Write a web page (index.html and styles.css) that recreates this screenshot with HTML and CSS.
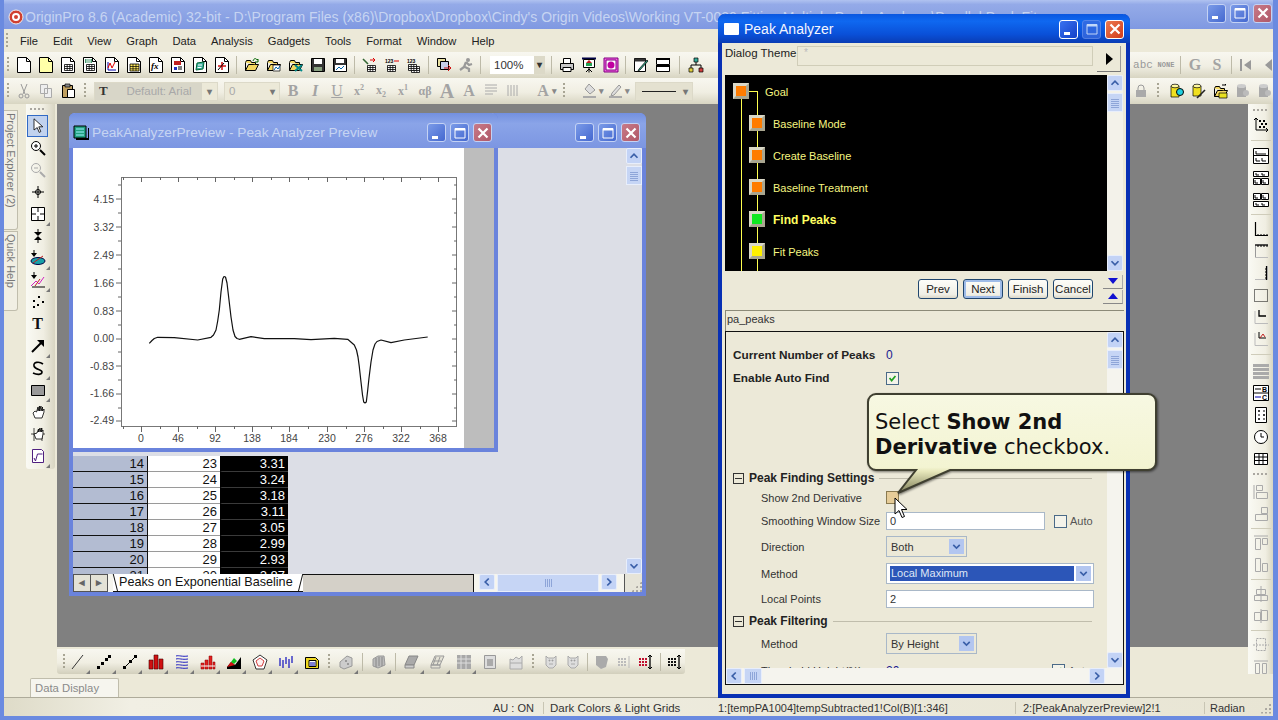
FILE: index.html
```html
<!DOCTYPE html>
<html>
<head>
    <meta charset="UTF-8">
    <title>OriginPro 8.6 - Peak Analyzer</title>
    <link rel="stylesheet" href="styles.css">
</head>
<body>
<svg class="defs" width="0" height="0">
    <defs>
        <g id="pg"><path d="M1.5 .5h9l4 4v11h-13z" fill="#fff" stroke="#000"/><path d="M10.5 .5v4h4" fill="none" stroke="#000"/></g>
        <g id="pgy"><path d="M1.5 .5h9l4 4v11h-13z" fill="#ffffa8" stroke="#000"/><path d="M10.5 .5v4h4" fill="none" stroke="#000"/></g>
        <g id="gr"><path d="M4.5 7.5h8v6h-8zM4.5 9.5h8M4.5 11.5h8M7.2 7.5v6M9.8 7.5v6" fill="#fff" stroke="#000" stroke-width=".8"/></g>
        <g id="fold"><path d="M1.5 5.5v8h10l3-6h-10l-3 6" fill="#f4d860" stroke="#000"/><path d="M1.5 5.5l1-2h4l1 2h4v2" fill="#f4d860" stroke="#000"/></g>
        <g id="crn"><path d="M16 20h4v-4z" fill="#777"/></g>
        <linearGradient id="callout-fill" gradientUnits="userSpaceOnUse" x1="0" y1="2" x2="0" y2="101">
            <stop offset="0" stop-color="#f7f8e2"/>
            <stop offset=".74" stop-color="#f3f4d2"/>
            <stop offset=".78" stop-color="#e8e8bc"/>
            <stop offset="1" stop-color="#7f7f58"/>
        </linearGradient>
    </defs>
    <symbol id="page" viewBox="0 0 16 16"><use href="#pg"/></symbol>
    <symbol id="page-y" viewBox="0 0 16 16"><use href="#pgy"/></symbol>
    <symbol id="page-wks" viewBox="0 0 16 16"><use href="#pg"/><use href="#gr"/></symbol>
    <symbol id="page-mat" viewBox="0 0 16 16"><use href="#pg"/><use href="#gr"/><path d="M3 2h7v4H3z" fill="#4a9a70"/><path d="M4 3h5M4 5h5" stroke="#fff"/></symbol>
    <symbol id="page-plot" viewBox="0 0 16 16"><use href="#pg"/><path d="M4 5v8h8" fill="none" stroke="#00a"/><path d="M4 11l2-5 2 5 3-6" fill="none" stroke="#d00"/></symbol>
    <symbol id="page-ywk" viewBox="0 0 16 16"><use href="#pg"/><path d="M4 7h9v7H4z" fill="#ffe860" stroke="#000" stroke-width=".8"/><path d="M4 9.5h9M4 11.8h9M7 7v7M10 7v7" stroke="#000" stroke-width=".7"/></symbol>
    <symbol id="page-fx" viewBox="0 0 16 16"><use href="#pg"/><text x="3" y="12" class="ic-t">fx</text></symbol>
    <symbol id="page-lay" viewBox="0 0 16 16"><use href="#pg"/><path d="M4 4h7v4H4z" fill="#c02020"/><path d="M4 10h3v3H4z" fill="#2030c0"/><path d="M8 10h4M8 12h4" stroke="#000"/></symbol>
    <symbol id="page-note" viewBox="0 0 16 16"><use href="#pg"/><path d="M5 6l7-1-1 7-7 1z" fill="#40b0a0" stroke="#063"/><path d="M6 8h4M5.5 10.5h4" stroke="#fff"/></symbol>
    <symbol id="page-red" viewBox="0 0 16 16"><use href="#pg"/><path d="M8 5v8M4 9h8" stroke="#d01010" stroke-width="1.5"/><path d="M4 13l6-7" stroke="#000"/></symbol>
    <symbol id="open" viewBox="0 0 16 16"><use href="#fold"/><path d="M9 4c1-3 3-3 4-1l1-1v3h-3" fill="none" stroke="#060"/></symbol>
    <symbol id="open-gr" viewBox="0 0 16 16"><use href="#fold"/><path d="M7 8h7v6H7z" fill="#fff" stroke="#000" stroke-width=".7"/><path d="M8 13l2-3 2 2 2-3" stroke="#06a" fill="none"/></symbol>
    <symbol id="open-x" viewBox="0 0 16 16"><use href="#fold"/><path d="M7 8l7 6M14 8l-7 6" stroke="#088" stroke-width="2"/></symbol>
    <symbol id="save" viewBox="0 0 16 16"><path d="M1.5 1.5h13v13h-13z" fill="#333" stroke="#000"/><path d="M4 2h8v5H4z" fill="#fff"/><path d="M4 10h8v4H4z" fill="#88a080"/></symbol>
    <symbol id="save-gr" viewBox="0 0 16 16"><path d="M1.5 1.5h13v13h-13z" fill="#333" stroke="#000"/><path d="M4 2h8v4H4z" fill="#fff"/><path d="M3 8h11v6H3z" fill="#fff"/><path d="M4 13l3-3 2 2 3-3" stroke="#06a" fill="none"/></symbol>
    <symbol id="imp-wand" viewBox="0 0 16 16"><use href="#gr" transform="translate(1 1)"/><path d="M1 2l5 5" stroke="#363" stroke-width="1.6"/><path d="M8 3h5l-2-2M13 3l-2 2" stroke="#d00" fill="none"/></symbol>
    <symbol id="imp-1" viewBox="0 0 16 16"><use href="#gr" transform="translate(-1 1)"/><text x="1" y="6" class="ic-s">123</text><path d="M10 4h5" stroke="#d00"/></symbol>
    <symbol id="imp-2" viewBox="0 0 16 16"><use href="#gr" transform="translate(1 2)"/><use href="#gr" transform="translate(-2 0)"/><text x="1" y="6" class="ic-s">123</text></symbol>
    <symbol id="dup" viewBox="0 0 16 16"><path d="M1.5 1.5h8v8h-8z" fill="#e8e0a0" stroke="#000"/><path d="M4.5 4.5h8v8h-8z" fill="#c8d0e8" stroke="#000"/><path d="M8 11h7M12 8l3 3-3 3" fill="none" stroke="#d01010"/></symbol>
    <symbol id="run" viewBox="0 0 16 16"><circle cx="10" cy="3" r="2" fill="#999"/><path d="M8 5l-2 5-4 3M8 5l3 3 3-1M7 10l4 2v3" fill="none" stroke="#999" stroke-width="2.2"/></symbol>
    <symbol id="print" viewBox="0 0 16 16"><path d="M4.5 1.5h7v5h-7z" fill="#fff" stroke="#000"/><path d="M1.5 6.5h13v6h-13z" fill="#c8c8c8" stroke="#000"/><path d="M4 10.5h8v4H4z" fill="#fff" stroke="#000"/></symbol>
    <symbol id="slide" viewBox="0 0 16 16"><path d="M1 1.5h14" stroke="#004" stroke-width="2"/><path d="M2.5 2.5h11v8h-11z" fill="#fff" stroke="#000"/><path d="M5 6l3-3 3 3" fill="#c02020"/><path d="M5 6h6v3H5z" fill="#20a050"/><path d="M8 10.5v5M5 15l3-3 3 3" stroke="#000" fill="none"/></symbol>
    <symbol id="pink" viewBox="0 0 16 16"><path d="M1 1h14v14H1z" fill="#f060e0" stroke="#800080"/><path d="M3 3h10v10H3z" fill="#fff" stroke="#800080"/><circle cx="8" cy="8" r="3.5" fill="#c000a0"/></symbol>
    <symbol id="notepad" viewBox="0 0 16 16"><path d="M1.5 1.5h11v13h-11z" fill="#fff" stroke="#000"/><path d="M1.5 1.5h11v3h-11z" fill="#333"/><path d="M6 12l8-9 1 1-8 9-2 1z" fill="#3a8" stroke="#000" stroke-width=".7"/></symbol>
    <symbol id="stack2" viewBox="0 0 16 16"><path d="M1.5 1.5h13v6h-13zM1.5 8.5h13v6h-13z" fill="#fff" stroke="#000"/><path d="M1 1h14v2H1zM1 8h14v2H1z" fill="#000"/></symbol>
    <symbol id="tree-i" viewBox="0 0 16 16"><path d="M8 4v4M3 11V8h10v3" fill="none" stroke="#000"/><path d="M6 1h4v4H6z" fill="#3a9" stroke="#000" stroke-width=".7"/><path d="M1 11h4v4H1z" fill="#e0d040" stroke="#000" stroke-width=".7"/><path d="M11 11h4v4h-4z" fill="#d04040" stroke="#000" stroke-width=".7"/></symbol>
    <symbol id="cut" viewBox="0 0 16 16"><path d="M5 1l4 10M11 1L7 11" stroke="#999" fill="none"/><circle cx="5" cy="13" r="2" fill="none" stroke="#999"/><circle cx="11" cy="13" r="2" fill="none" stroke="#999"/></symbol>
    <symbol id="copy" viewBox="0 0 16 16"><path d="M2.5 1.5h7v9h-7zM6.5 5.5h7v9h-7z" fill="#eee" stroke="#aaa"/></symbol>
    <symbol id="paste" viewBox="0 0 16 16"><path d="M2.5 2.5h10v12h-10z" fill="#c0a060" stroke="#000"/><path d="M5 1h5v3H5z" fill="#888" stroke="#000" stroke-width=".7"/><path d="M7.5 6.5h7v8h-7z" fill="#fff" stroke="#000"/></symbol>
    <symbol id="fill" viewBox="0 0 16 16"><path d="M7 1l6 6-5 4-5-5z" fill="#ddd" stroke="#999"/><path d="M1 13h13v2H1z" fill="#aaa"/></symbol>
    <symbol id="pen" viewBox="0 0 16 16"><path d="M4 10l7-8 2 2-7 8-3 1z" fill="#ddd" stroke="#999"/><path d="M1 13h13v2H1z" fill="#aaa"/></symbol>
    <symbol id="align-i" viewBox="0 0 16 16"><path d="M2 2h12M2 5h12M2 8h12M2 11h8" stroke="#aaa"/></symbol>
    <symbol id="bars-i" viewBox="0 0 16 16"><path d="M3 2v11M6 2v11M9 2v11M12 2v11" stroke="#aaa"/></symbol>
    <symbol id="lock" viewBox="0 0 16 16"><path d="M5 7V5a3 3 0 016 0v2" fill="none" stroke="#999"/><path d="M3 7h10v7H3z" fill="#aaa"/></symbol>
    <symbol id="db-find" viewBox="0 0 16 16"><path d="M2 3h8v11H2z" fill="#f0e020" stroke="#000" stroke-width=".7"/><ellipse cx="6" cy="3" rx="4" ry="1.8" fill="#fff8a0" stroke="#000" stroke-width=".7"/><circle cx="11" cy="9" r="3.5" fill="#20d0e0" stroke="#000"/></symbol>
    <symbol id="db-edit" viewBox="0 0 16 16"><path d="M2 3h8v10H2z" fill="#f0e020" stroke="#000" stroke-width=".7"/><ellipse cx="6" cy="3" rx="4" ry="1.8" fill="#fff8a0" stroke="#000" stroke-width=".7"/><path d="M6 15l8-8" stroke="#222" stroke-width="1.6"/></symbol>
    <symbol id="db-open" viewBox="0 0 16 16"><use href="#fold"/><path d="M6 10h8v5H6z" fill="#e8e020" stroke="#000" stroke-width=".7"/><path d="M9 2h4l-1-1" stroke="#000" fill="none"/></symbol>
    <symbol id="db-off" viewBox="0 0 16 16"><path d="M2 3h9v11H2z" fill="#aaa"/><ellipse cx="6.5" cy="3" rx="4.5" ry="2" fill="#ccc"/><circle cx="11" cy="10" r="3" fill="#bbb"/></symbol>
    <symbol id="first" viewBox="0 0 16 16"><path d="M3 2v12" stroke="#999" stroke-width="2"/><path d="M13 3L6 8l7 5z" fill="#999"/></symbol>
    <symbol id="prevb" viewBox="0 0 16 16"><path d="M12 2L5 8l7 6z" fill="#999"/></symbol>
    <symbol id="arrow" viewBox="0 0 16 20"><path d="M3 1v14l4-3 2.5 6 2-1-2.5-6h5z" fill="#fff" stroke="#000"/></symbol>
    <symbol id="zin" viewBox="0 0 16 16"><circle cx="6" cy="6" r="4.5" fill="#fff" stroke="#000"/><path d="M4 6h4M6 4v4" stroke="#000"/><path d="M10 10l5 5" stroke="#000" stroke-width="2"/></symbol>
    <symbol id="zout" viewBox="0 0 16 16"><circle cx="6" cy="6" r="4.5" fill="none" stroke="#aaa"/><path d="M4 6h4" stroke="#aaa"/><path d="M10 10l5 5" stroke="#aaa" stroke-width="2"/></symbol>
    <symbol id="cross" viewBox="0 0 16 16"><path d="M8 2v12M2 8h12" stroke="#000"/><circle cx="8" cy="8" r="2.5" fill="none" stroke="#000"/></symbol>
    <symbol id="mask" viewBox="0 0 16 16"><path d="M1.5 1.5h13v13h-13z" fill="#fff" stroke="#000"/><path d="M8 1v5M8 10v5M1 8h5M10 8h5" stroke="#000"/><use href="#crn"/></symbol>
    <symbol id="vmerge" viewBox="0 0 16 16"><path d="M8 1v5M8 10v5" stroke="#000"/><path d="M4 4h8L8 8zM4 12h8L8 8z" fill="#000"/></symbol>
    <symbol id="pick-a" viewBox="0 0 16 16"><path d="M4 0v5" stroke="#000"/><path d="M1 3h6L4 7z" fill="#000"/><ellipse cx="8" cy="11" rx="7" ry="3.5" fill="#18a0a8" stroke="#004"/><path d="M3 13l10-7" stroke="#c02020"/><use href="#crn"/></symbol>
    <symbol id="pick-b" viewBox="0 0 16 16"><path d="M4 0v5" stroke="#000"/><path d="M1 3h6L4 7z" fill="#000"/><path d="M1 14l5-5 3 3 5-7" fill="none" stroke="#d020c0"/><path d="M2 15h13" stroke="#000"/><path d="M5 14l5-7" stroke="#c02020"/><use href="#crn"/></symbol>
    <symbol id="dots" viewBox="0 0 16 16"><path d="M8 2h2v2H8zM3 6h2v2H3zM12 7h2v2h-2zM7 10h2v2H7zM3 12h2v2H3z" fill="#000"/></symbol>
    <symbol id="line-a" viewBox="0 0 16 16"><path d="M2 14L13 3" stroke="#000" stroke-width="2"/><path d="M7 2h7v7z" fill="#000"/><use href="#crn"/></symbol>
    <symbol id="curve" viewBox="0 0 16 16"><path d="M13 4C9 1 3 2 4 6s8 3 8 6-5 3-9 1" fill="none" stroke="#000" stroke-width="1.6"/><use href="#crn"/></symbol>
    <symbol id="rect-i" viewBox="0 0 16 16"><path d="M1.5 3.5h13v10h-13z" fill="#999" stroke="#000"/><use href="#crn"/></symbol>
    <symbol id="hand" viewBox="0 0 16 16"><path d="M3 9l2 5h7l2-6V5l-1.5 2V3L11 7V2L9.5 7V2L8 7V3L6.5 8 5 7z" fill="#fff" stroke="#000" stroke-width=".8"/></symbol>
    <symbol id="hand2" viewBox="0 0 16 16"><path d="M1 8h14M4 2v13M12 2v13" stroke="#000" stroke-width=".7"/><path d="M4 8l2 5h6l1-5V4l-1.5 2V2L10 6V2L8.5 6V3L7 7z" fill="#fff" stroke="#000" stroke-width=".8"/></symbol>
    <symbol id="sqrt" viewBox="0 0 16 16"><path d="M2.5 1.5h9l2 2v11h-11z" fill="#fff" stroke="#502080"/><path d="M4 10l1.500 3 2-7h5" fill="none" stroke="#502080"/><use href="#crn"/></symbol>
    <symbol id="ln" viewBox="0 0 16 16"><path d="M2 15L13 1" stroke="#333"/><use href="#crn"/></symbol>
    <symbol id="sc" viewBox="0 0 16 16"><path d="M1 12h3v3H1zM5 8h3v3H5zM9 4h3v3H9zM12 1h3v3h-3z" fill="#000"/><use href="#crn"/></symbol>
    <symbol id="lsc" viewBox="0 0 16 16"><path d="M2 14L14 2" stroke="#000"/><path d="M1 12h3v3H1zM7 6h3v3H7zM12 1h3v3h-3z" fill="#000"/><use href="#crn"/></symbol>
    <symbol id="col" viewBox="0 0 16 16"><path d="M1 6h4v9H1zM6 1h4v14H6zM11 5h4v10h-4z" fill="#d01010" stroke="#400" stroke-width=".6"/><use href="#crn"/></symbol>
    <symbol id="waves" viewBox="0 0 16 16"><path d="M2 2c3-1 6 1 12 0M2 5c3-1 6 1 12 0M2 8c3-1 6 1 12 0M2 11c3-1 6 1 12 0M2 14c3-1 6 1 12 0" fill="none" stroke="#2020c0"/><use href="#crn"/></symbol>
    <symbol id="colr" viewBox="0 0 16 16"><path d="M1 9h3v6H1zM5 6h3v9H5zM9 2h3v13H9zM13 8h2v7h-2z" fill="#e02020" stroke="#800" stroke-width=".5"/><path d="M1 12h14" stroke="#fff"/><use href="#crn"/></symbol>
    <symbol id="area" viewBox="0 0 16 16"><path d="M1 13l4-5 4 3 6-8v12H1z" fill="#000"/><path d="M5 8l3-4 3 3-3 3z" fill="#10c020"/><path d="M9 11l-4-3-4 5z" fill="#d01010"/><use href="#crn"/></symbol>
    <symbol id="polar" viewBox="0 0 16 16"><path d="M8 1l7 5-3 9H4L1 6z" fill="#fff" stroke="#333"/><path d="M8 4l4 3-2 5H6L4 7z" fill="#fff0f0" stroke="#d04040"/><use href="#crn"/></symbol>
    <symbol id="spike" viewBox="0 0 16 16"><path d="M2 4v8M5 6v8M8 3v7M11 5v9M14 2v7" stroke="#2020c0" stroke-width="1.3"/><use href="#crn"/></symbol>
    <symbol id="temp" viewBox="0 0 16 16"><path d="M1.5 3.5h10l3 3v8h-13z" fill="#f0d820" stroke="#000"/><path d="M5 6.5h7v6H5z" fill="#fff" stroke="#000"/><path d="M6 9h5M6 11h5" stroke="#00a"/></symbol>
    <symbol id="off-a" viewBox="0 0 16 16"><path d="M2 8l7-6 5 2v8l-8 3-4-2z" fill="#ccc" stroke="#999"/><path d="M7 6h2v2H7zM9 9h2v2H9z" fill="#999"/><use href="#crn"/></symbol>
    <symbol id="off-b" viewBox="0 0 16 16"><path d="M2 5l5-3h6l1 9-7 3-5-2z" fill="#bbb" stroke="#999"/><path d="M5 4v9M8 3v9M11 3v9" stroke="#888"/><use href="#crn"/></symbol>
    <symbol id="off-c" viewBox="0 0 16 16"><path d="M1 11l4-9h9l-4 9z" fill="#aaa" stroke="#888"/><path d="M1 11h9v3H1z" fill="#ccc" stroke="#888"/><use href="#crn"/></symbol>
    <symbol id="off-d" viewBox="0 0 16 16"><path d="M1 11l4-9h9l-4 9zM1 11h9v3H1z" fill="#e4e2d6" stroke="#999"/><path d="M3 7h8M6 3l-3 8M10 3l-3 8" stroke="#999"/><use href="#crn"/></symbol>
    <symbol id="off-e" viewBox="0 0 16 16"><path d="M1 1h14v14H1z" fill="#a8a8a8"/><path d="M1 5h14M1 9h14M5 1v14M10 1v14" stroke="#ddd"/><use href="#crn"/></symbol>
    <symbol id="off-f" viewBox="0 0 16 16"><path d="M2.5 1.5h11v13h-11z" fill="#ddd" stroke="#999"/><path d="M5 5h6v7H5z" fill="#aaa"/></symbol>
    <symbol id="off-g" viewBox="0 0 16 16"><path d="M2 5l3 1 3-3 3 2 3-3v13H2z" fill="#ddd" stroke="#aaa"/><path d="M2 9h12" stroke="#aaa"/></symbol>
    <symbol id="off-h" viewBox="0 0 16 16"><path d="M3 2l2 2h6l2-2v9l-3 3H6l-3-3z" fill="#ddd" stroke="#aaa"/><path d="M6 6h1v1H6zM9 6h1v1H9zM6 10h4" stroke="#aaa"/></symbol>
    <symbol id="off-i" viewBox="0 0 16 16"><path d="M2 2h10l2 3-2 8-5 2-5-4z" fill="#aaa"/></symbol>
    <symbol id="d-ar" viewBox="0 0 16 16"><path d="M2 4h2v2H2zM5 4h2v2H5zM8 4h2v2H8zM2 7h2v2H2zM5 7h2v2H5zM8 7h2v2H8zM2 10h2v2H2zM5 10h2v2H5zM8 10h2v2H8z" fill="#bbb"/><path d="M13 2v12" stroke="#bbb"/></symbol>
    <symbol id="r-ar" viewBox="0 0 16 16"><path d="M1 4h2v2H1zM4 4h2v2H4zM7 4h2v2H7zM1 7h2v2H1zM4 7h2v2H4zM7 7h2v2H7zM1 10h2v2H1zM4 10h2v2H4zM7 10h2v2H7z" fill="#c01030"/><path d="M12 1v14" stroke="#000" stroke-width="1.3"/><path d="M10 3l2-2 2 2M10 13l2 2 2-2" fill="none" stroke="#000"/></symbol>
    <symbol id="k-ar" viewBox="0 0 16 16"><path d="M1 4h2v2H1zM4 4h2v2H4zM7 4h2v2H7zM1 7h2v2H1zM4 7h2v2H4zM7 7h2v2H7zM1 10h2v2H1zM4 10h2v2H4zM7 10h2v2H7z" fill="#111"/><path d="M12 1v14" stroke="#000" stroke-width="1.3"/><path d="M10 3l2-2 2 2M10 13l2 2 2-2" fill="none" stroke="#000"/></symbol>
    <symbol id="xy" viewBox="0 0 16 16"><path d="M3 1v12h12M1 3l2-2 2 2M13 11l2 2-2 2" fill="none" stroke="#000"/><path d="M6 3h2v2H6zM10 3h2v2h-2zM8 6h2v2H8zM12 6h2v2h-2zM6 9h2v2H6zM10 9h2v2h-2z" fill="#000"/></symbol>
    <symbol id="l-one" viewBox="0 0 16 16"><path d="M.5.5h15v15H.5zM.5 7.5h15" fill="#fff" stroke="#000"/><path d="M3 10v3h4M9 10v3h4M3 3v3h10" fill="none" stroke="#000"/></symbol>
    <symbol id="l-four" viewBox="0 0 16 16"><path d="M.5 1.5h15v5H.5zM.5 8.5h7v6h-7zM8.5 8.5h7v6h-7z" fill="#fff" stroke="#000"/><path d="M3 3v2h3M9 3v2h3M2 10v3h3M10 10v3h3" fill="none" stroke="#000"/></symbol>
    <symbol id="l-five" viewBox="0 0 16 16"><path d="M.5 1.5h7v6h-7zM8.5 1.5h7v6h-7zM.5 9.5h15v5H.5z" fill="#fff" stroke="#000"/><path d="M2 3v3h3M10 3v3h3M3 11v2h3M9 11v2h3" fill="none" stroke="#000"/></symbol>
    <symbol id="ax-l" viewBox="0 0 16 16"><path d="M2.5 1v13.5H15" fill="none" stroke="#000" stroke-width="1.2"/><path d="M5 14v-1M8 14v-1M11 14v-1M14 14v-1" stroke="#000"/></symbol>
    <symbol id="ax-t" viewBox="0 0 16 16"><path d="M2.5 14.5V2H15" fill="none" stroke="#999"/><path d="M2 2h13" stroke="#000" stroke-width="1.2"/><path d="M5 2v2M8 2v2M11 2v2M14 2v2" stroke="#000"/><path d="M2.5 14.5H15" stroke="#bbb"/></symbol>
    <symbol id="ax-r" viewBox="0 0 16 16"><path d="M2 14.5h12.500V1" fill="none" stroke="#bbb"/><path d="M13.5 1v14" stroke="#000" stroke-width="1.2"/><path d="M13 4h-1M13 7h-1M13 10h-1M13 13h-1" stroke="#000"/></symbol>
    <symbol id="ax-b" viewBox="0 0 16 16"><path d="M1.5 2.5h13v12h-13z" fill="none" stroke="#000" stroke-dasharray="1 1"/></symbol>
    <symbol id="ax-s" viewBox="0 0 16 16"><path d="M2 2v12.5h13" fill="none" stroke="#bbb"/><path d="M6 1v6h7" fill="none" stroke="#000" stroke-width="1.3"/></symbol>
    <symbol id="ax-w" viewBox="0 0 16 16"><path d="M2 2v12.5h13" fill="none" stroke="#bbb"/><path d="M6 1v6h7" fill="none" stroke="#000"/><path d="M7 7l3-4 2 3" fill="none" stroke="#c02020"/></symbol>
    <symbol id="rows4" viewBox="0 0 16 16"><path d="M0 1h16v3H0zM0 5h16v3H0zM0 9h16v3H0zM0 13h16v3H0z" fill="#aaa"/></symbol>
    <symbol id="bc" viewBox="0 0 16 16"><path d="M.5.5h15v15H.5zM.5 8h15" fill="#fff" stroke="#000"/><text x="9" y="7" class="ic-t2">B</text><text x="9" y="15" class="ic-t2">C</text><path d="M2 4h6" stroke="#000"/><path d="M2 12h6" stroke="#00a"/></symbol>
    <symbol id="dots-p" viewBox="0 0 16 16"><path d="M2.5.5h11v15h-11z" fill="#fff" stroke="#000"/><path d="M5 4h2M6 3v2M10 4h2M5 8h2M10 8h2M11 7v2M5 12h2M6 11v2M10 12h2" stroke="#000"/></symbol>
    <symbol id="clock" viewBox="0 0 16 16"><circle cx="8" cy="8" r="6.5" fill="#fff" stroke="#000"/><path d="M8 4v4h3" fill="none" stroke="#000"/></symbol>
    <symbol id="table" viewBox="0 0 16 16"><path d="M1.5 2.5h13v11h-13zM1.5 6h13M1.5 9.5h13M6 2.5v11M10 2.5v11" fill="#fff" stroke="#000"/></symbol>
    <symbol id="gal-a" viewBox="0 0 16 16"><path d="M1 1v14" stroke="#aaa"/><path d="M3.5 1.5h6v5h-6zM3.5 8.5h11v6h-11z" fill="none" stroke="#aaa"/></symbol>
    <symbol id="gal-b" viewBox="0 0 16 16"><path d="M8.5 1.5h6v6h-6zM2.5 8.5h12v6h-12z" fill="none" stroke="#aaa"/></symbol>
    <symbol id="gal-c" viewBox="0 0 16 16"><path d="M1 1h14" stroke="#aaa"/><path d="M2.5 3.5h5v11h-5zM9.5 3.5h5v6h-5z" fill="none" stroke="#aaa"/></symbol>
    <symbol id="gal-d" viewBox="0 0 16 16"><path d="M2.5 1.5h5v13h-5zM9.5 6.5h5v8h-5z" fill="none" stroke="#aaa"/></symbol>
    <symbol id="gal-e" viewBox="0 0 16 16"><path d="M8 0v16M3.5 3.5h9v5h-9zM1.5 9.5h13v5h-13z" fill="none" stroke="#aaa"/></symbol>
    <symbol id="gal-f" viewBox="0 0 16 16"><path d="M8 1v14M1.5 4.5h6v8h-6zM8.5 2.5h6v10h-6z" fill="none" stroke="#aaa"/></symbol>
    <symbol id="gal-g" viewBox="0 0 16 16"><path d="M0 8h16M3.5 1.5h9v12h-9z" fill="none" stroke="#aaa" stroke-dasharray="2 1"/></symbol>
    <symbol id="gal-h" viewBox="0 0 16 16"><path d="M1 2h14M2.5 4.5h4v10h-4zM9.5 4.5h4v10h-4z" fill="none" stroke="#aaa"/></symbol>
    <symbol id="w-min" viewBox="0 0 16 16"><path d="M3 11h6v3H3z" fill="#fff"/></symbol>
    <symbol id="w-max" viewBox="0 0 16 16"><path d="M3 3.5h10v9.5H3z" fill="none" stroke="#fff"/><path d="M3 3h10v2.5H3z" fill="#fff"/></symbol>
    <symbol id="w-x" viewBox="0 0 16 16"><path d="M3.5 3.5l9 9M12.5 3.5l-9 9" stroke="#fff" stroke-width="2.2"/></symbol>
    <symbol id="up" viewBox="0 0 16 16"><path d="M4 10l4-4 4 4" fill="none" stroke="#3a5fa8" stroke-width="2"/></symbol>
    <symbol id="down" viewBox="0 0 16 16"><path d="M4 6l4 4 4-4" fill="none" stroke="#3a5fa8" stroke-width="2"/></symbol>
    <symbol id="left" viewBox="0 0 16 16"><path d="M10 4L6 8l4 4" fill="none" stroke="#3a5fa8" stroke-width="2"/></symbol>
    <symbol id="right" viewBox="0 0 16 16"><path d="M6 4l4 4-4 4" fill="none" stroke="#3a5fa8" stroke-width="2"/></symbol>
    <symbol id="check" viewBox="0 0 13 13"><path d="M3 6l2.5 3L10 3.5" fill="none" stroke="#21a121" stroke-width="2"/></symbol>
</svg>

<div class="app">
    <div class="titlebar">
        <svg class="app-logo" viewBox="0 0 16 16"><circle cx="8" cy="8" r="7" fill="#d04030" stroke="#eee"/><circle cx="8" cy="8" r="3" fill="none" stroke="#fff" stroke-width="2"/></svg>
        <span class="title-text">OriginPro 8.6 (Academic) 32-bit - D:\Program Files (x86)\Dropbox\Dropbox\Cindy's Origin Videos\Working VT-0030 Fitting Multiple Peaks Analyzer\Parallel Peak Fit</span>
        <div class="wbtns main-btns">
            <span class="wbtn"><svg><use href="#w-min"/></svg></span>
            <span class="wbtn"><svg><use href="#w-max"/></svg></span>
            <span class="wbtn close"><svg><use href="#w-x"/></svg></span>
        </div>
    </div>

    <div class="menubar">
        <i class="grip"></i>
        <span>File</span><span>Edit</span><span>View</span><span>Graph</span><span>Data</span><span>Analysis</span><span>Gadgets</span><span>Tools</span><span>Format</span><span>Window</span><span>Help</span>
    </div>

    <div class="toolbar tb-one">
        <i class="grip"></i>
        <svg><use href="#page"/></svg><svg><use href="#page-y"/></svg><svg><use href="#page-wks"/></svg><svg><use href="#page-mat"/></svg><svg><use href="#page-plot"/></svg><svg><use href="#page-ywk"/></svg><svg><use href="#page-fx"/></svg><svg><use href="#page-lay"/></svg><svg><use href="#page-note"/></svg><svg><use href="#page-red"/></svg>
        <i class="sep"></i>
        <svg><use href="#open"/></svg><svg><use href="#open-gr"/></svg><svg><use href="#open-x"/></svg><svg><use href="#save"/></svg><svg><use href="#save-gr"/></svg>
        <i class="sep"></i>
        <svg><use href="#imp-wand"/></svg><svg><use href="#imp-1"/></svg><svg><use href="#imp-2"/></svg>
        <i class="sep"></i>
        <svg><use href="#dup"/></svg><svg><use href="#run"/></svg>
        <i class="sep"></i>
        <div class="zoom-combo"><span>100%</span><b>▾</b></div>
        <i class="sep"></i>
        <svg><use href="#print"/></svg><svg><use href="#slide"/></svg><svg><use href="#pink"/></svg>
        <i class="sep"></i>
        <svg><use href="#notepad"/></svg><svg><use href="#stack2"/></svg>
        <i class="sep wide"></i>
        <svg><use href="#tree-i"/></svg>
        <div class="tb-right faded">
            <span class="mini">abc</span><span class="mini tiny">NONE</span>
            <i class="sep"></i>
            <span class="serif-b">G</span><span class="serif-b">S</span>
            <i class="sep"></i>
            <svg><use href="#first"/></svg><svg><use href="#prevb"/></svg>
        </div>
    </div>

    <div class="toolbar tb-two">
        <i class="grip"></i>
        <svg><use href="#cut"/></svg><svg><use href="#copy"/></svg><svg><use href="#paste"/></svg>
        <i class="grip mid"></i>
        <div class="combo font-combo"><span class="font-t">T</span><span>Default: Arial</span><b>▾</b></div>
        <div class="combo size-combo"><span>0</span><b>▾</b></div>
        <div class="fmt">
            <span class="serif-b">B</span><span class="serif-b ital">I</span><span class="serif-b under">U</span>
            <span class="serif-b sm">x<sup>2</sup></span><span class="serif-b sm">x<sub>2</sub></span><span class="serif-b sm">x<sup>1</sup></span><span class="serif-b sm">αβ</span>
            <span class="serif-b lg">A</span><span class="serif-b">A</span>
            <svg><use href="#align-i"/></svg><svg class="bars"><use href="#bars-i"/></svg>
            <span class="serif-b">A</span><b class="dd">▾</b>
        </div>
        <i class="grip mid"></i>
        <svg><use href="#fill"/></svg><b class="dd">▾</b>
        <svg><use href="#pen"/></svg><b class="dd">▾</b>
        <div class="combo line-combo"><span class="line-sample"></span><b>▾</b></div>
        <div class="tb-right">
            <svg class="faded-i"><use href="#lock"/></svg>
            <i class="grip mid"></i>
            <svg><use href="#db-find"/></svg><svg><use href="#db-edit"/></svg><svg><use href="#db-open"/></svg><svg><use href="#db-off"/></svg><svg><use href="#db-off"/></svg>
        </div>
    </div>

    <div class="work">
        <div class="left-col">
            <div class="vtabs">
                <div class="vtab explorer">Project Explorer (2)</div>
                <div class="vtab help">Quick Help</div>
            </div>
            <div class="ltools">
                <i class="dotgrip"></i>
                <span class="tool on"><svg><use href="#arrow"/></svg></span>
                <span class="tool"><svg><use href="#zin"/></svg></span>
                <span class="tool"><svg><use href="#zout"/></svg></span>
                <span class="tool"><svg><use href="#cross"/></svg></span>
                <span class="tool"><svg><use href="#mask"/></svg></span>
                <span class="tool"><svg><use href="#vmerge"/></svg></span>
                <span class="tool"><svg><use href="#pick-a"/></svg></span>
                <span class="tool"><svg><use href="#pick-b"/></svg></span>
                <span class="tool"><svg><use href="#dots"/></svg></span>
                <span class="tool text-t">T</span>
                <span class="tool"><svg><use href="#line-a"/></svg></span>
                <span class="tool"><svg><use href="#curve"/></svg></span>
                <span class="tool"><svg><use href="#rect-i"/></svg></span>
                <span class="tool"><svg><use href="#hand"/></svg></span>
                <span class="tool"><svg><use href="#hand2"/></svg></span>
                <span class="tool"><svg><use href="#sqrt"/></svg></span>
            </div>
        </div>

        <div class="mdi">
            <div class="mdi-win sheet-win">
                <div class="win-title">
                    <div class="wbtns">
                        <span class="wbtn"><svg><use href="#w-min"/></svg></span>
                        <span class="wbtn"><svg><use href="#w-max"/></svg></span>
                        <span class="wbtn close"><svg><use href="#w-x"/></svg></span>
                    </div>
                </div>
                <div class="sheet-body">
                    <div class="sheet">
                        <div class="sheet-row"><span>14</span><span>23</span><span>3.31</span></div>
                        <div class="sheet-row"><span>15</span><span>24</span><span>3.24</span></div>
                        <div class="sheet-row"><span>16</span><span>25</span><span>3.18</span></div>
                        <div class="sheet-row"><span>17</span><span>26</span><span>3.11</span></div>
                        <div class="sheet-row"><span>18</span><span>27</span><span>3.05</span></div>
                        <div class="sheet-row"><span>19</span><span>28</span><span>2.99</span></div>
                        <div class="sheet-row"><span>20</span><span>29</span><span>2.93</span></div>
                        <div class="sheet-row"><span>21</span><span>30</span><span>2.87</span></div>
                    </div>
                    <div class="vscroll clear">
                        <span class="sb-btn"><svg><use href="#up"/></svg></span>
                        <span class="sb-thumb v"></span>
                        <span class="sb-btn end"><svg><use href="#down"/></svg></span>
                    </div>
                </div>
                <div class="sheet-foot">
                    <span class="nav-arrows"><b>◂</b><b>▸</b></span>
                    <div class="sheet-tab">Peaks on Exponential Baseline</div>
                    <div class="tab-rest"></div>
                    <div class="hscroll">
                        <span class="sb-btn"><svg><use href="#left"/></svg></span>
                        <span class="sb-thumb h"></span>
                        <span class="sb-btn"><svg><use href="#right"/></svg></span>
                    </div>
                    <span class="resize-grip"></span>
                </div>
            </div>

            <div class="mdi-win preview-win">
                <div class="win-title">
                    <svg class="win-ico" viewBox="0 0 16 16"><path d="M1 1h12v12H1z" fill="#20a080" stroke="#000"/><path d="M3 4h8M3 7h8M3 10h8" stroke="#a0f0ff"/><path d="M3 14h13V3" fill="none" stroke="#000" stroke-width="2"/></svg>
                    <span>PeakAnalyzerPreview - Peak Analyzer Preview</span>
                    <div class="wbtns">
                        <span class="wbtn"><svg><use href="#w-min"/></svg></span>
                        <span class="wbtn"><svg><use href="#w-max"/></svg></span>
                        <span class="wbtn close"><svg><use href="#w-x"/></svg></span>
                    </div>
                </div>
                <div class="preview-body">
                    <svg class="plot" viewBox="72 148 391 300">
                        <rect x="120.5" y="177.5" width="335" height="249" fill="#fff" stroke="#777"/>
                        <path class="ticks" d="M115 199h5M115 227h5M115 255h5M115 283h5M115 311h5M115 339h5M115 366h5M115 394h5M115 421h5M117 185h3M117 213h3M117 241h3M117 269h3M117 297h3M117 325h3M117 352h3M117 380h3M117 408h3M451 199h5M451 227h5M451 255h5M451 283h5M451 311h5M451 339h5M451 366h5M451 394h5M451 421h5M453 185h3M453 213h3M453 241h3M453 269h3M453 297h3M453 325h3M453 352h3M453 380h3M453 408h3"/>
                        <path class="ticks" d="M140.5 426v6M177.5 426v6M214.5 426v6M251.5 426v6M288.5 426v6M326.5 426v6M363.5 426v6M400.5 426v6M437.5 426v6M122.5 426v3M159.5 426v3M196.5 426v3M233.5 426v3M270.5 426v3M307.5 426v3M345.5 426v3M382.5 426v3M419.5 426v3M140.5 177v5M177.5 177v5M214.5 177v5M251.5 177v5M288.5 177v5M326.5 177v5M363.5 177v5M400.5 177v5M437.5 177v5M122.5 177v3M159.5 177v3M196.5 177v3M233.5 177v3M270.5 177v3M307.5 177v3M345.5 177v3M382.5 177v3M419.5 177v3"/>
                        <path class="curve" d="M148.3 343.3L151 340.5 153.3 338.5 156.7 337.3 173.3 337.7 196.7 340 210 337.3 212.5 335 215 330 216.7 321 218.3 310 220 292 221.7 279 223 276.5 224.5 277 226 283 228 300 230 317 232 330 234 336.5 236 338.5 238.3 339.3 250 336.7 263.3 338.7 293.3 338.7 310 339.7 333.3 338.3 346.7 339.3 353.3 345 355.5 350 357 357 358.3 366.7 360 382 361.5 395 362.7 402 364 403 365.3 402 366.5 392 368 378 370 362 372 350 374 344 376 341.5 380 340 390 342.7 403.3 340 426.7 337"/>
                        <g class="ylab">
                            <text x="113" y="203">4.15</text><text x="113" y="231">3.32</text><text x="113" y="259">2.49</text><text x="113" y="287">1.66</text><text x="113" y="315">0.83</text><text x="113" y="342">0.00</text><text x="113" y="370">-0.83</text><text x="113" y="397">-1.66</text><text x="113" y="424">-2.49</text>
                        </g>
                        <g class="xlab">
                            <text x="140" y="442">0</text><text x="177" y="442">46</text><text x="214" y="442">92</text><text x="251" y="442">138</text><text x="288" y="442">184</text><text x="326" y="442">230</text><text x="363" y="442">276</text><text x="400" y="442">322</text><text x="437" y="442">368</text>
                        </g>
                    </svg>
                    <div class="preview-gap"></div>
                </div>
            </div>
        </div>

        <div class="rtools">
            <i class="dotgrip"></i>
            <svg><use href="#xy"/></svg>
            <i class="hsep s-two"></i>
            <svg><use href="#l-one"/></svg><svg><use href="#l-four"/></svg><svg><use href="#l-five"/></svg>
            <i class="hsep"></i>
            <svg><use href="#ax-l"/></svg><svg><use href="#ax-t"/></svg><svg><use href="#ax-r"/></svg><svg><use href="#ax-b"/></svg><svg><use href="#ax-s"/></svg><svg><use href="#ax-w"/></svg>
            <i class="hsep s-three"></i>
            <svg><use href="#rows4"/></svg><svg><use href="#bc"/></svg><svg><use href="#dots-p"/></svg><svg><use href="#clock"/></svg><svg><use href="#table"/></svg>
            <i class="dotgrip low"></i>
            <svg><use href="#gal-a"/></svg><svg><use href="#gal-b"/></svg>
            <i class="hsep"></i>
            <svg><use href="#gal-c"/></svg><svg><use href="#gal-d"/></svg>
            <i class="hsep"></i>
            <svg><use href="#gal-e"/></svg><svg><use href="#gal-f"/></svg>
            <i class="hsep"></i>
            <svg><use href="#gal-g"/></svg><svg><use href="#gal-h"/></svg>
        </div>

        <div class="bottom-bar">
            <div class="bottom-tools">
                <i class="grip"></i>
                <svg class="first"><use href="#ln"/></svg><svg><use href="#sc"/></svg><svg><use href="#lsc"/></svg><svg><use href="#col"/></svg><svg><use href="#waves"/></svg><svg><use href="#colr"/></svg><svg><use href="#area"/></svg><svg><use href="#polar"/></svg><svg><use href="#spike"/></svg><svg><use href="#temp"/></svg>
                <i class="grip"></i>
                <svg><use href="#off-a"/></svg>
                <i class="sep"></i>
                <svg><use href="#off-b"/></svg>
                <i class="sep"></i>
                <svg><use href="#off-c"/></svg><svg><use href="#off-d"/></svg><svg><use href="#off-e"/></svg><svg><use href="#off-f"/></svg><svg><use href="#off-g"/></svg>
                <i class="grip tail"></i>
                <svg class="t"><use href="#off-h"/></svg><svg class="t"><use href="#off-h"/></svg>
                <i class="sep"></i>
                <svg class="t"><use href="#off-i"/></svg><svg class="t"><use href="#d-ar"/></svg><svg class="t"><use href="#r-ar"/></svg>
                <i class="sep"></i>
                <svg class="t"><use href="#k-ar"/></svg>
            </div>
        </div>
    </div>

    <div class="tabrow"><div class="data-tab">Data Display</div></div>

    <div class="statusbar">
        <span class="st-au">AU : ON</span>
        <span class="st-theme">Dark Colors &amp; Light Grids</span>
        <span class="st-col">1:[tempPA1004]tempSubtracted1!Col(B)[1:346]</span>
        <span class="st-graph">2:[PeakAnalyzerPreview]2!1</span>
        <span class="st-unit">Radian<i class="dots-grip"></i></span>
    </div>

    <div class="dialog">
        <div class="dlg-title">
            <span class="dlg-ico"></span>
            <span>Peak Analyzer</span>
            <div class="wbtns">
                <span class="wbtn"><svg><use href="#w-min"/></svg></span>
                <span class="wbtn dim"><svg><use href="#w-max"/></svg></span>
                <span class="wbtn close"><svg><use href="#w-x"/></svg></span>
            </div>
        </div>
        <div class="dlg-body">
            <div class="theme-row">
                <span class="theme-label">Dialog Theme</span>
                <div class="theme-box">*</div>
                <span class="theme-go"></span>
            </div>
            <div class="tree-wrap">
                <div class="tree">
                    <div class="node root"><i class="box orange"></i><span>Goal</span></div>
                    <div class="node"><i class="box orange"></i><span>Baseline Mode</span></div>
                    <div class="node"><i class="box orange"></i><span>Create Baseline</span></div>
                    <div class="node"><i class="box orange"></i><span>Baseline Treatment</span></div>
                    <div class="node current"><i class="box green"></i><span>Find Peaks</span></div>
                    <div class="node"><i class="box yellow"></i><span>Fit Peaks</span></div>
                </div>
                <div class="vscroll">
                    <span class="sb-btn"><svg><use href="#up"/></svg></span>
                    <span class="sb-thumb v"></span>
                    <span class="sb-btn end"><svg><use href="#down"/></svg></span>
                </div>
            </div>
            <div class="nav-row">
                <button class="xp-btn">Prev</button>
                <button class="xp-btn default">Next</button>
                <button class="xp-btn">Finish</button>
                <button class="xp-btn">Cancel</button>
                <div class="updown">
                    <span class="ud"><i class="tri-down"></i></span>
                    <span class="ud"><i class="tri-up"></i></span>
                </div>
            </div>
            <div class="pa-name">pa_peaks</div>
            <div class="panel">
                <div class="form">
                    <div class="f-row r-count"><span class="lbl top">Current Number of Peaks</span><span class="val">0</span></div>
                    <div class="f-row r-auto"><span class="lbl top">Enable Auto Find</span><span class="cb"><svg><use href="#check"/></svg></span></div>
                    <div class="group g-peak"><i class="plus"></i><span>Peak Finding Settings</span><i class="rule"></i></div>
                    <div class="f-row r-show"><span class="lbl">Show 2nd Derivative</span><span class="cb hover"></span></div>
                    <div class="f-row r-smooth"><span class="lbl">Smoothing Window Size</span><span class="inp smooth">0</span><span class="cb plain"></span><span class="auto">Auto</span></div>
                    <div class="f-row r-sel"><span class="lbl">Direction</span><span class="sel dir"><span>Both</span><i class="sel-btn"><svg><use href="#down"/></svg></i></span></div>
                    <div class="f-row r-sel"><span class="lbl">Method</span><span class="sel full"><span class="picked">Local Maximum</span><i class="sel-btn"><svg><use href="#down"/></svg></i></span></div>
                    <div class="f-row r-local"><span class="lbl">Local Points</span><span class="inp full">2</span></div>
                    <div class="group g-filter"><i class="plus"></i><span>Peak Filtering</span><i class="rule"></i></div>
                    <div class="f-row r-method"><span class="lbl">Method</span><span class="sel height"><span>By Height</span><i class="sel-btn"><svg><use href="#down"/></svg></i></span></div>
                    <div class="f-row r-thresh"><span class="lbl">Threshold Height(%)</span><span class="val">20</span><span class="cb plain far"><svg><use href="#check"/></svg></span><span class="auto">Auto</span></div>
                </div>
                <div class="vscroll">
                    <span class="sb-btn"><svg><use href="#up"/></svg></span>
                    <span class="sb-thumb v"></span>
                    <span class="sb-btn end"><svg><use href="#down"/></svg></span>
                </div>
                <div class="hscroll panel-h">
                    <span class="sb-btn"><svg><use href="#left"/></svg></span>
                    <span class="sb-thumb h small"></span>
                    <span class="sb-btn end"><svg><use href="#right"/></svg></span>
                </div>
            </div>
        </div>
    </div>

    <div class="callout">
        <svg class="callout-shape" viewBox="0 0 304 106">
            <path d="M10 2h272a8 8 0 018 8v60a8 8 0 01-8 8H84L32 101 50 78H10a8 8 0 01-8-8V10a8 8 0 018-8z"/>
        </svg>
        <p>Select <b>Show 2nd Derivative</b> checkbox.</p>
    </div>

    <svg class="cursor" viewBox="0 0 14 22"><path d="M1 1v16l4-3.500 3 7 2.500-1-3-7H13z" fill="#fff" stroke="#000"/></svg>
</div>
</body>
</html>
```

FILE: styles.css
```css
* {
    box-sizing: border-box;
}

html, body {
    margin: 0;
    padding: 0;
}

body {
    font-family: "Liberation Sans", Arial, sans-serif;
    font-size: 11px;
    color: #111;
    background: #808080;
    overflow: hidden;
}

.defs {
    position: absolute;
}

symbol {
    overflow: visible;
}

.ic-t { font: italic bold 9px "Liberation Serif", serif; }
.ic-s { font: bold 5px "Liberation Sans", sans-serif; }
.ic-t2 { font: bold 7px "Liberation Sans", sans-serif; }

.app {
    position: relative;
    width: 1278px;
    height: 720px;
    background: #ece9d8;
    border: solid #6a8ae0;
    border-width: 0 5px 4px 4px;
    display: flex;
    flex-direction: column;
    overflow: hidden;
}

/* main window */
.titlebar {
    height: 29px;
    margin: 0 -5px 0 -4px;
    padding: 5px 0 0 8px;
    display: flex;
    align-items: center;
    color: #c6d4f2;
    font-size: 14px;
    background: linear-gradient(#b0c2f0, #94aae8 15%, #8aa2e4 60%, #7f98e2);
    white-space: nowrap;
    overflow: hidden;
    flex: none;
}

.app-logo {
    width: 16px;
    height: 16px;
    margin-right: 1px;
    flex: none;
}

.title-text {
    flex: 1;
    overflow: hidden;
}

.wbtns {
    display: flex;
    gap: 4px;
    margin-left: auto;
    flex: none;
}

.wbtn {
    width: 19px;
    height: 19px;
    border-radius: 3px;
    border: 1px solid #c4d2f4;
    background: linear-gradient(135deg, #7b9be8, #4468d0);
    display: flex;
    align-items: center;
    justify-content: center;
}

.wbtn svg {
    width: 16px;
    height: 16px;
}

.wbtn.close {
    background: linear-gradient(135deg, #c87a88, #b05868);
}

.main-btns {
    padding: 0 6px 8px 0;
}

.menubar {
    height: 23px;
    display: flex;
    align-items: center;
    gap: 15px;
    padding-left: 2px;
    font-size: 11.2px;
    color: #222;
    background: #ece9d8;
    flex: none;
}

.grip {
    width: 2px;
    height: 16px;
    flex: none;
    background: repeating-linear-gradient(#a8a594 0 2px, transparent 2px 4px);
    margin-right: -3px;
}

.grip.mid {
    margin: 0 7px 0 5px;
}

.toolbar {
    height: 26px;
    display: flex;
    align-items: center;
    padding-left: 3px;
    background: linear-gradient(#f8f7f0, #f0eee2 55%, #d8d5c2);
    white-space: nowrap;
    overflow: hidden;
    flex: none;
}

.toolbar svg {
    width: 16px;
    height: 16px;
    margin: 0 3px;
    flex: none;
}

.toolbar > .grip + svg {
    margin-left: 10px;
}

.sep {
    width: 1px;
    height: 18px;
    margin: 0 3px;
    flex: none;
    background: #bdbaa8;
}

.tb-one > .sep {
    margin: 0 4px 0 3px;
}

.tb-one > .sep.wide {
    margin: 0 5px;
}

.zoom-combo {
    width: 55px;
    height: 18px;
    margin: 0 3px 0 5px;
    display: flex;
    align-items: center;
    justify-content: space-between;
    padding-left: 4px;
    background: #fff;
    font-size: 11.5px;
    color: #333;
    flex: none;
}

.zoom-combo b {
    width: 11px;
    height: 18px;
    text-align: center;
    background: #dcd9c8;
    font-size: 10px;
    line-height: 18px;
}

.tb-right {
    margin-left: auto;
    display: flex;
    align-items: center;
    flex: none;
}

.tb-right.faded {
    margin-right: -6px;
}

.tb-two .tb-right {
    margin-right: -3px;
}

.mini {
    width: 24px;
    text-align: center;
    font: 11px "Liberation Mono", monospace;
    color: #999;
}

.mini.tiny {
    width: 22px;
    font-size: 7px;
    font-weight: bold;
}

.serif-b {
    width: 22px;
    text-align: center;
    font: bold 16px "Liberation Serif", serif;
    color: #a3a3a3;
    flex: none;
}

.serif-b.ital { font-style: italic; }
.serif-b.under { text-decoration: underline; font-weight: normal; }
.serif-b.sm { font-size: 12px; }
.serif-b.lg { font-size: 20px; }

.serif-b sup, .serif-b sub {
    font-size: 8px;
}

.combo {
    height: 19px;
    display: flex;
    align-items: center;
    justify-content: space-between;
    font-size: 11.5px;
    color: #a8a8a8;
    border: 1px solid #dcd9c8;
    flex: none;
}

.combo b {
    width: 14px;
    text-align: center;
    font-size: 10px;
    color: #777;
}

.font-t {
    width: 16px;
    margin-left: -19px;
    font: bold 13px "Liberation Serif", serif;
    color: #333;
}

.font-combo {
    width: 124px;
    margin: 0 6px 0 1px;
    padding-left: 23px;
    background: linear-gradient(90deg, #d8d6c8 88%, #ece9d8 88%);
}

.size-combo {
    width: 56px;
    padding-left: 4px;
    margin-right: 2px;
    background: #ece9d8;
}

.fmt {
    display: flex;
    align-items: center;
}

.fmt .bars {
    margin-right: 11px;
}

.dd {
    font-size: 9px;
    color: #888;
    margin: 0 1px 0 -2px;
    flex: none;
}

.line-combo {
    width: 58px;
    margin-left: 4px;
    padding-left: 6px;
    background: #e4e1d0;
}

.line-sample {
    width: 34px;
    height: 1px;
    background: #222;
}

/* workspace grid */
.work {
    display: grid;
    grid-template-columns: 53px 1fr 25px;
    grid-template-rows: 543px 27px;
    flex: none;
}

.left-col {
    grid-row: 1 / 3;
    display: flex;
    align-items: flex-start;
    gap: 4px;
}

.vtabs {
    width: 18px;
    padding-top: 6px;
    flex: none;
}

.vtab {
    writing-mode: vertical-rl;
    font-size: 11px;
    color: #777;
    padding: 2px 0 0 1px;
    background: #f1efe4;
    border: 1px solid #c0bdac;
    border-left: 0;
    border-radius: 0 0 3px 0;
}

.explorer { height: 120px; }
.help { height: 80px; margin-top: 1px; }

.ltools {
    width: 29px;
    height: 365px;
    padding-left: 1px;
    display: flex;
    flex-direction: column;
    align-items: flex-start;
    background: linear-gradient(90deg, #fafaf4, #f0eee2 60%, #d8d5c2);
    border-radius: 0 0 3px 3px;
}

.dotgrip {
    width: 16px;
    height: 2px;
    flex: none;
    margin: 4px 0 5px 3px;
    background: repeating-linear-gradient(90deg, #aaa7a0 0 2px, transparent 2px 4px);
}

.tool {
    width: 21px;
    height: 22px;
    flex: none;
    display: flex;
    align-items: center;
    justify-content: center;
}

.tool svg {
    width: 16px;
    height: 16px;
    overflow: visible;
}

.tool.on {
    background: #c1d2ee;
    border: 1px solid #316ac5;
}

.text-t {
    font: bold 16px "Liberation Serif", serif;
}

.mdi {
    position: relative;
    background: #808080;
}

.mdi-win {
    position: absolute;
    display: flex;
    flex-direction: column;
    border: 4px solid #6a83dc;
    border-top: 0;
    border-radius: 6px 6px 0 0;
    background: #dcdee6;
}

.win-title {
    height: 35px;
    margin: 0 -4px;
    padding: 4px 6px 0 4px;
    display: flex;
    align-items: center;
    color: #c6d4f2;
    font-size: 13.7px;
    border-radius: 6px 6px 0 0;
    background: linear-gradient(#7390e0, #8aa4e8 30%, #7c96e2);
    flex: none;
}

.win-ico {
    width: 16px;
    height: 16px;
    margin-right: 3px;
}

.sheet-win {
    left: 12px;
    top: 9px;
    width: 577px;
    height: 483px;
}

.sheet-body {
    flex: 1;
    display: flex;
    min-height: 0;
}

.sheet {
    flex: 1;
    padding-top: 308px;
    overflow: hidden;
}

.sheet-row {
    display: grid;
    grid-template-columns: 75px 72px 68px;
    height: 16px;
    line-height: 15px;
    font-size: 13px;
    text-align: right;
}

.sheet-row span {
    padding-right: 3px;
    border-bottom: 1px solid #9a9a9a;
    background: #fff;
}

.sheet-row span:first-child {
    background: #b3bcd2;
    border-bottom-color: #111;
    border-right: 1px solid #111;
}

.sheet-row span:last-child {
    background: #000;
    color: #fff;
    border-left: 2px solid #000;
    border-bottom-color: #3a3a3a;
}

.vscroll {
    width: 16px;
    display: flex;
    flex-direction: column;
    gap: 2px;
    flex: none;
    background: #f3f2ea;
}

.vscroll.clear {
    background: transparent;
}

.sb-btn {
    width: 16px;
    height: 16px;
    flex: none;
    background: #c3d3f6;
    border: 1px solid #e8eefb;
    border-radius: 2px;
    display: flex;
    align-items: center;
    justify-content: center;
}

.sb-btn svg {
    width: 14px;
    height: 14px;
}

.sb-btn.end {
    margin-top: auto;
}

.sb-thumb {
    flex: none;
    border: 1px solid #e8eefb;
    background-color: #c6d5f5;
}

.sb-thumb.v {
    height: 19px;
    background-image: repeating-linear-gradient(transparent 0 1px, #8ea5d8 1px 2px);
    background-size: 8px 10px;
    background-position: center;
    background-repeat: no-repeat;
}

.sb-thumb.h {
    width: 102px;
    background-image: repeating-linear-gradient(90deg, transparent 0 1px, #8ea5d8 1px 2px);
    background-size: 8px 8px;
    background-position: center;
    background-repeat: no-repeat;
}

.sb-thumb.h.small {
    width: 18px;
}

.sheet-foot {
    height: 18px;
    display: flex;
    align-items: stretch;
    background: #f6f5ee;
    flex: none;
}

.nav-arrows {
    display: flex;
    width: 35px;
    border: 1px solid #555;
    background: #e4e2d6;
    flex: none;
}

.nav-arrows b {
    width: 17px;
    text-align: center;
    font-size: 11px;
    line-height: 15px;
    color: #666;
}

.nav-arrows b + b {
    border-left: 1px solid #555;
}

.sheet-tab {
    position: relative;
    width: 190px;
    padding-left: 6px;
    margin-left: 5px;
    font-size: 12.6px;
    line-height: 17px;
    white-space: nowrap;
    background: #fff;
    border-bottom: 1px solid #111;
    flex: none;
}

.sheet-tab::before, .sheet-tab::after {
    content: "";
    position: absolute;
    top: 0;
    width: 1px;
    height: 18px;
    background: #111;
}

.sheet-tab::before {
    left: 2px;
    transform: skewX(14deg);
}

.sheet-tab::after {
    right: 2px;
    transform: skewX(-14deg);
}

.tab-rest {
    width: 171px;
    background: #d4d0c8;
    border-top: 1px solid #111;
    border-right: 1px solid #111;
    flex: none;
}

.hscroll {
    display: flex;
    gap: 2px;
    margin-left: 5px;
    width: 138px;
    flex: none;
}

.resize-grip {
    flex: 1;
    margin-left: 7px;
    display: flex;
    align-items: flex-end;
    justify-content: flex-end;
    border-left: 1px solid #555;
    background: #e6e4d8;
}

.resize-grip::after, .dots-grip {
    content: "";
    width: 11px;
    height: 11px;
    background: radial-gradient(circle, #aaa7a0 1px, transparent 1px) 0 0 / 4px 4px;
    clip-path: polygon(100% 0, 100% 100%, 0 100%);
}

.preview-win {
    left: 12px;
    top: 9px;
    width: 429px;
    height: 339px;
    background: #fff;
}

.preview-body {
    flex: 1;
    display: flex;
    background: #fff;
    min-height: 0;
}

.plot {
    width: 391px;
    height: 300px;
    flex: none;
}

.ticks {
    fill: none;
    stroke: #666;
}

.curve {
    fill: none;
    stroke: #111;
    stroke-width: 1.2;
    stroke-linejoin: round;
}

.plot text {
    font-size: 10.5px;
    fill: #444;
}

.ylab { text-anchor: end; }
.xlab { text-anchor: middle; }

.preview-gap {
    flex: 1;
    background: #bdbdbd;
}

.rtools {
    grid-column: 3;
    grid-row: 1 / 3;
    display: flex;
    flex-direction: column;
    align-items: center;
    gap: 6px;
    padding-top: 5px;
    background: linear-gradient(90deg, #fafaf4, #f0eee2 70%, #d8d5c2);
}

.rtools svg {
    width: 16px;
    height: 16px;
    flex: none;
}

.rtools .dotgrip {
    margin: 0;
}

.rtools .dotgrip.low {
    margin-bottom: 3px;
}

.hsep {
    width: 20px;
    height: 1px;
    flex: none;
    background: #cfccba;
}

.hsep.s-two { margin: 1px 0; }
.hsep.s-three { margin: 1px 0 2px; }

.bottom-bar {
    grid-column: 2;
    grid-row: 2;
    background: #ece9d8;
}

.bottom-tools {
    width: 628px;
    height: 25px;
    margin-top: 2px;
    padding-left: 3px;
    display: flex;
    align-items: center;
    background: linear-gradient(#f8f7f0, #f0eee2 55%, #d2cfbc);
    border-radius: 0 0 3px 3px;
}

.bottom-tools svg {
    width: 16px;
    height: 16px;
    margin: 0 5px;
    overflow: visible;
    flex: none;
}

.bottom-tools svg.first {
    margin-left: 2px;
}

.bottom-tools svg.t {
    margin: 0 3px;
}

.bottom-tools .grip {
    margin: 0 3px;
}

.bottom-tools .grip.tail {
    margin-right: 6px;
}

.tabrow {
    height: 23px;
    padding: 4px 0 0 26px;
    background: #ece9d8;
    flex: none;
}

.data-tab {
    width: 89px;
    height: 19px;
    padding-left: 4px;
    line-height: 18px;
    color: #8a8a8a;
    font-size: 11.3px;
    background: #f6f5ee;
    border: 1px solid #c0bdac;
    border-bottom: 0;
    border-radius: 2px 2px 0 0;
}

.statusbar {
    height: 19px;
    padding-top: 2px;
    display: grid;
    grid-template-columns: 489px 50px 175px 297px 189px 1fr;
    align-items: center;
    font-size: 11px;
    color: #333;
    background: linear-gradient(90deg, #dedbc8, #f1efe4 10%, #e8e5d4);
    border-top: 1px solid #aeab9a;
    white-space: nowrap;
    flex: none;
}

.st-au { grid-column: 2; }
.st-theme { padding-left: 6px; border-left: 1px solid #c8c5b4; font-size: 11.5px; }
.st-graph { padding-left: 7px; border-left: 1px solid #c8c5b4; }

.st-unit {
    display: flex;
    align-items: center;
    justify-content: space-between;
    padding: 0 2px 0 5px;
    border-left: 1px solid #c8c5b4;
}

.dots-grip {
    width: 11px;
    height: 11px;
}

/* peak analyzer dialog */
.dialog {
    position: absolute;
    left: 714px;
    top: 14px;
    width: 412px;
    height: 684px;
    display: flex;
    flex-direction: column;
    border: 4px solid #0830b4;
    border-top: 0;
    border-radius: 7px 7px 0 0;
    background: #ece9d8;
}

.dlg-title {
    height: 29px;
    margin: 0 -4px;
    padding: 1px 6px 0;
    display: flex;
    align-items: center;
    color: #f4f6ff;
    font-size: 14px;
    border-radius: 7px 7px 0 0;
    background: linear-gradient(#0a56e0, #0f68f0 25%, #0a50d8 70%, #0a3cb4);
    flex: none;
}

.dlg-ico {
    width: 15px;
    height: 12px;
    margin-right: 5px;
    background: #fff;
    border-radius: 1px;
}

.dlg-title .wbtn {
    background: linear-gradient(135deg, #3a72f0, #1240c8);
    border-color: #fff;
}

.dlg-title .wbtn.dim {
    background: #3a6ce0;
    border-color: #6a90ea;
    opacity: .75;
}

.dlg-title .wbtn.close {
    background: linear-gradient(135deg, #ec7a50, #d23c1c);
}

.dlg-body {
    flex: 1;
    padding: 0 2px 0 3px;
    display: flex;
    flex-direction: column;
    min-height: 0;
}

.theme-row {
    height: 32px;
    flex: none;
    display: flex;
    align-items: flex-start;
}

.theme-label {
    width: 72px;
    padding-top: 4px;
    font-size: 11.5px;
    white-space: nowrap;
    color: #222;
    flex: none;
}

.theme-box {
    width: 296px;
    height: 20px;
    margin-top: 3px;
    padding-left: 6px;
    color: #bbb;
    font-size: 10px;
    border: 1px solid #d0cdb8;
    background: #ece9d8;
    flex: none;
}

.theme-go {
    position: relative;
    width: 24px;
    height: 26px;
    margin: 3px 0 0 4px;
    border-right: 1px solid #999;
    border-bottom: 1px solid #777;
}

.theme-go::after {
    content: "";
    position: absolute;
    left: 9px;
    top: 7px;
    border-left: 7px solid #000;
    border-top: 6px solid transparent;
    border-bottom: 6px solid transparent;
}

.tree-wrap {
    height: 196px;
    flex: none;
    display: flex;
}

.tree {
    width: 382px;
    color: #f6f680;
    font-size: 11px;
    overflow: hidden;
    background-color: #000;
    background-image:
        linear-gradient(#ffff50, #ffff50),
        linear-gradient(#ffff50, #ffff50),
        linear-gradient(#ffff50, #ffff50);
    background-repeat: no-repeat;
    background-size: 1px 100%, 1px 100%, 10px 1px;
    background-position: 16px 16px, 32px 16px, 22px 16px;
}

.node {
    height: 32px;
    padding-left: 24px;
    display: flex;
    align-items: center;
    gap: 8px;
}

.node span {
    margin-top: 2px;
}

.node.root {
    padding-left: 8px;
    gap: 16px;
}

.node.current {
    font-weight: bold;
    font-size: 12px;
    color: #ffff60;
}

.box {
    width: 16px;
    height: 16px;
    flex: none;
    border: 3px solid #dad8c8;
    border-right-color: #a9a690;
    border-bottom-color: #a9a690;
}

.orange { background: #ff7c00; }
.green { background: #10e820; }
.yellow { background: #fff000; }

.nav-row {
    height: 39px;
    flex: none;
    display: flex;
    align-items: center;
    gap: 5px;
    padding: 0 0 3px 193px;
}

.xp-btn {
    width: 40px;
    height: 20px;
    padding: 0;
    font: 11.5px "Liberation Sans", Arial, sans-serif;
    color: #222;
    border: 1px solid #20466e;
    border-radius: 3px;
    background: linear-gradient(#fdfdf8, #f0efe6 80%, #dcd8c8);
}

.xp-btn.default {
    box-shadow: inset 0 0 0 2px #9fbce8;
}

.updown {
    margin-left: 5px;
    display: flex;
    flex-direction: column;
    gap: 1px;
}

.ud {
    width: 20px;
    height: 14px;
    display: flex;
    align-items: center;
    justify-content: center;
    border-right: 1px solid #aaa;
    border-bottom: 1px solid #888;
}

.tri-down, .tri-up {
    border-left: 5px solid transparent;
    border-right: 5px solid transparent;
}

.tri-down { border-top: 6px solid #1010d0; }
.tri-up { border-bottom: 6px solid #1010d0; }

.pa-name {
    height: 21px;
    flex: none;
    padding: 1px 0 0 1px;
    font-size: 11px;
    line-height: 15px;
    color: #333;
    border-top: 1px solid #8c8a78;
    border-left: 1px solid #8c8a78;
}

.panel {
    height: 354px;
    width: 399px;
    display: grid;
    grid-template-columns: 1fr 16px;
    grid-template-rows: 336px 1fr;
    border: 1px solid #111;
    background: #ece9d8;
}

.panel .vscroll {
    margin-right: 1px;
    background: #f5f4ee;
}

.panel-h {
    grid-column: 1 / 3;
    width: auto;
    margin: 0;
    background: #f5f4ee;
}

.panel-h .sb-btn.end {
    margin: 0 18px 0 auto;
}

.form {
    overflow: hidden;
    padding-left: 7px;
    font-size: 11px;
}

.f-row {
    display: flex;
    align-items: center;
    color: #333;
}

.lbl {
    width: 125px;
    margin-left: 28px;
    flex: none;
    white-space: nowrap;
}

.lbl.top {
    width: 153px;
    margin-left: 0;
    font-size: 11.8px;
    font-weight: bold;
    color: #222;
}

.val {
    font-size: 12px;
    color: #1a1a90;
}

.r-count { height: 22px; margin-top: 12px; }
.r-auto { height: 24px; }
.r-show { height: 17px; margin-top: 1px; }
.r-smooth { height: 18px; margin-top: 6px; }
.r-sel { height: 21px; margin-top: 6px; }
.r-local { height: 18px; margin-top: 6px; }
.r-method { height: 21px; margin-top: 2px; }
.r-thresh { height: 17px; margin-top: 8px; }

.group {
    height: 20px;
    display: flex;
    align-items: center;
    gap: 5px;
    font-size: 12px;
    font-weight: bold;
    color: #222;
}

.g-peak { margin-top: 78px; }
.g-filter { margin-top: 3px; }

.plus {
    width: 11px;
    height: 11px;
    flex: none;
    border: 1px solid #333;
    background: linear-gradient(#333, #333) center / 7px 1px no-repeat;
}

.rule {
    flex: 1;
    height: 1px;
    margin-right: 15px;
    background: #c0bdac;
}

.cb {
    width: 13px;
    height: 13px;
    flex: none;
    border: 1px solid #4a6a88;
    background: #f4f3ea;
}

.cb svg {
    display: block;
    width: 11px;
    height: 11px;
}

.cb.hover {
    background: #e6cc98;
    border-color: #8a7a50;
}

.cb.plain {
    margin-left: 9px;
    margin-right: 3px;
}

.cb.far {
    margin-left: 153px;
}

.auto {
    color: #555;
}

.inp {
    height: 18px;
    padding-left: 3px;
    line-height: 17px;
    background: #fff;
    border: 1px solid #a9b8c8;
    flex: none;
}

.inp.smooth { width: 159px; }
.inp.full { width: 208px; }

.sel {
    height: 21px;
    padding: 2px 2px 2px 4px;
    display: flex;
    align-items: center;
    justify-content: space-between;
    background: #fff;
    border: 1px solid #a9b8c8;
    flex: none;
}

.sel.dir { width: 81px; background: #ece9d8; }
.sel.height { width: 91px; background: #ece9d8; }
.sel.full { width: 208px; padding-left: 3px; }

.picked {
    flex: 1;
    margin-right: 2px;
    padding-left: 1px;
    line-height: 15px;
    height: 15px;
    color: #dfe6f6;
    background: #2c56b8;
}

.sel-btn {
    width: 15px;
    height: 15px;
    background: #b3c6f0;
    display: flex;
    align-items: center;
    justify-content: center;
}

.sel-btn svg {
    width: 13px;
    height: 13px;
}

/* tutorial callout over the dialog */
.callout {
    position: absolute;
    left: 862px;
    top: 392px;
    width: 304px;
    height: 106px;
}

.callout-shape {
    position: absolute;
    inset: 0;
    width: 304px;
    height: 106px;
    overflow: visible;
    filter: drop-shadow(1px 1px 1px rgba(0, 0, 0, .5));
}

.callout-shape path {
    fill: url(#callout-fill);
    stroke: #3f3f30;
    stroke-width: 2;
}

.callout p {
    position: relative;
    margin: 0;
    padding: 18px 0 0 9px;
    width: 280px;
    font: 21px/25px "DejaVu Sans", Verdana, sans-serif;
    color: #111;
}

.cursor {
    position: absolute;
    left: 890px;
    top: 497px;
    width: 14px;
    height: 22px;
}
```
